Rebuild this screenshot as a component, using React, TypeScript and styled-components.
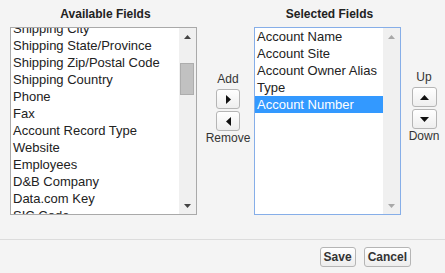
import React from "react";
import styled, { createGlobalStyle } from "styled-components";

const GlobalStyle = createGlobalStyle`
  html, body {
    margin: 0;
    padding: 0;
    background: #f4f4f4;
  }
  body {
    font-family: "Liberation Sans", Arial, sans-serif;
  }
`;

const available = [
	"Shipping City",
	"Shipping State/Province",
	"Shipping Zip/Postal Code",
	"Shipping Country",
	"Phone",
	"Fax",
	"Account Record Type",
	"Website",
	"Employees",
	"D&B Company",
	"Data.com Key",
	"SIC Code",
];

const selected = [
	"Account Name",
	"Account Site",
	"Account Owner Alias",
	"Type",
	"Account Number",
];

const Page = styled.div`
  width: 445px;
  height: 273px;
  background: #f4f4f4;
  color: #222;
  overflow: hidden;
`;

const Main = styled.div`
  display: flex;
  align-items: flex-start;
  padding-left: 10px;
`;

const FieldColumn = styled.div<{ $width: number }>`
  display: flex;
  flex-direction: column;
  flex: none;
  width: ${(p) => p.$width}px;
`;

const Heading = styled.div`
  height: 27px;
  display: flex;
  align-items: center;
  justify-content: center;
  font-size: 12px;
  font-weight: bold;
  color: #222;
  padding-left: 4px;
`;

const ListBox = styled.div<{ $focused?: boolean }>`
  display: flex;
  height: 188px;
  box-sizing: border-box;
  background: #fff;
  border: 1px solid ${(p) => (p.$focused ? "#86aee8" : "#a9a9a9")};
  overflow: hidden;
`;

const Options = styled.div<{ $offset: number }>`
  flex: 1;
  overflow: hidden;
  & > div:first-child {
    margin-top: ${(p) => -p.$offset}px;
  }
`;

const Option = styled.div<{ $active?: boolean }>`
  height: 17px;
  line-height: 17px;
  font-size: 13px;
  padding-left: 2px;
  white-space: nowrap;
  background: ${(p) => (p.$active ? "#3399ff" : "transparent")};
  color: ${(p) => (p.$active ? "#fff" : "#222")};
`;

const ScrollTrack = styled.div`
  width: 17px;
  display: flex;
  flex-direction: column;
  background: #f0f0f0;
`;

const ScrollArrow = styled.div`
  height: 17px;
  display: flex;
  align-items: center;
  justify-content: center;
`;

const ScrollBody = styled.div`
  flex: 1;
  position: relative;
`;

const Thumb = styled.div<{ $top: number; $height: number }>`
  position: absolute;
  left: 1px;
  width: 12px;
  top: ${(p) => p.$top}px;
  height: ${(p) => p.$height}px;
  background: #c1c1c1;
  border: 1px solid #adadad;
`;

const MoveColumn = styled.div<{ $width: number; $top: number; $shift: number }>`
  box-sizing: border-box;
  flex: none;
  width: ${(p) => p.$width}px;
  padding-top: ${(p) => p.$top}px;
  padding-left: ${(p) => p.$shift}px;
  display: flex;
  flex-direction: column;
  align-items: center;
`;

const MoveLabel = styled.div`
  font-size: 12px;
  line-height: 14px;
  color: #333;
  white-space: nowrap;
`;

const MoveButton = styled.button<{ $wide?: boolean }>`
  box-sizing: border-box;
  width: ${(p) => (p.$wide ? 25 : 24)}px;
  height: 20px;
  margin: 0;
  padding: 0;
  display: flex;
  align-items: center;
  justify-content: center;
  border: 1px solid #b5b5b5;
  border-radius: 3px;
  background: linear-gradient(#ffffff, #eeeeee);
`;

const ButtonStack = styled.div`
  display: flex;
  flex-direction: column;
  gap: 2px;
  margin: 3px 0 0;
`;

const Footer = styled.div`
  margin-top: 24px;
  border-top: 1px solid #dcdcdc;
  padding: 7px 34px 0 0;
  display: flex;
  justify-content: flex-end;
  gap: 8px;
`;

const ActionButton = styled.button`
  box-sizing: border-box;
  height: 20px;
  padding: 0 3px;
  margin: 0;
  font-family: "Liberation Sans", Arial, sans-serif;
  font-size: 12px;
  font-weight: bold;
  color: #333;
  border: 1px solid #b5b5b5;
  border-radius: 3px;
  background: linear-gradient(#ffffff, #ededed);
`;

type Dir = "up" | "down" | "left" | "right";

const Triangle = ({ dir, w, h, color }: { dir: Dir; w: number; h: number; color: string }) => {
	const pts: Record<Dir, string> = {
		up: `0,${h} ${w / 2},0 ${w},${h}`,
		down: `0,0 ${w},0 ${w / 2},${h}`,
		left: `${w},0 ${w},${h} 0,${h / 2}`,
		right: `0,0 ${w},${h / 2} 0,${h}`,
	};
	return (
		<svg width={w} height={h} viewBox={`0 0 ${w} ${h}`}>
			<polygon points={pts[dir]} fill={color} />
		</svg>
	);
};

const ScrollBar = ({ thumb, color }: { thumb?: { top: number; height: number }; color: string }) => (
	<ScrollTrack>
		<ScrollArrow>
			<Triangle dir="up" w={7} h={4} color={color} />
		</ScrollArrow>
		<ScrollBody>{thumb && <Thumb $top={thumb.top} $height={thumb.height} />}</ScrollBody>
		<ScrollArrow>
			<Triangle dir="down" w={7} h={4} color={color} />
		</ScrollArrow>
	</ScrollTrack>
);

export default function App() {
	return (
		<Page>
			<GlobalStyle />
			<Main>
				<FieldColumn $width={187}>
					<Heading>Available Fields</Heading>
					<ListBox>
						<Options $offset={8}>
							{available.map((f) => (
								<Option key={f}>{f}</Option>
							))}
						</Options>
						<ScrollBar thumb={{ top: 18, height: 30 }} color="#444" />
					</ListBox>
				</FieldColumn>

				<MoveColumn $width={57} $top={72} $shift={5}>
					<MoveLabel>Add</MoveLabel>
					<ButtonStack>
						<MoveButton>
							<Triangle dir="right" w={5} h={9} color="#111" />
						</MoveButton>
						<MoveButton>
							<Triangle dir="left" w={5} h={9} color="#111" />
						</MoveButton>
					</ButtonStack>
					<MoveLabel>Remove</MoveLabel>
				</MoveColumn>

				<FieldColumn $width={147}>
					<Heading>Selected Fields</Heading>
					<ListBox $focused>
						<Options $offset={0}>
							{selected.map((f) => (
								<Option key={f} $active={f === "Account Number"}>
									{f}
								</Option>
							))}
						</Options>
						<ScrollBar color="#a8a8a8" />
					</ListBox>
				</FieldColumn>

				<MoveColumn $width={44} $top={70} $shift={2}>
					<MoveLabel>Up</MoveLabel>
					<ButtonStack>
						<MoveButton $wide>
							<Triangle dir="up" w={9} h={5} color="#111" />
						</MoveButton>
						<MoveButton $wide>
							<Triangle dir="down" w={9} h={5} color="#111" />
						</MoveButton>
					</ButtonStack>
					<MoveLabel>Down</MoveLabel>
				</MoveColumn>
			</Main>
			<Footer>
				<ActionButton>Save</ActionButton>
				<ActionButton>Cancel</ActionButton>
			</Footer>
		</Page>
	);
}
